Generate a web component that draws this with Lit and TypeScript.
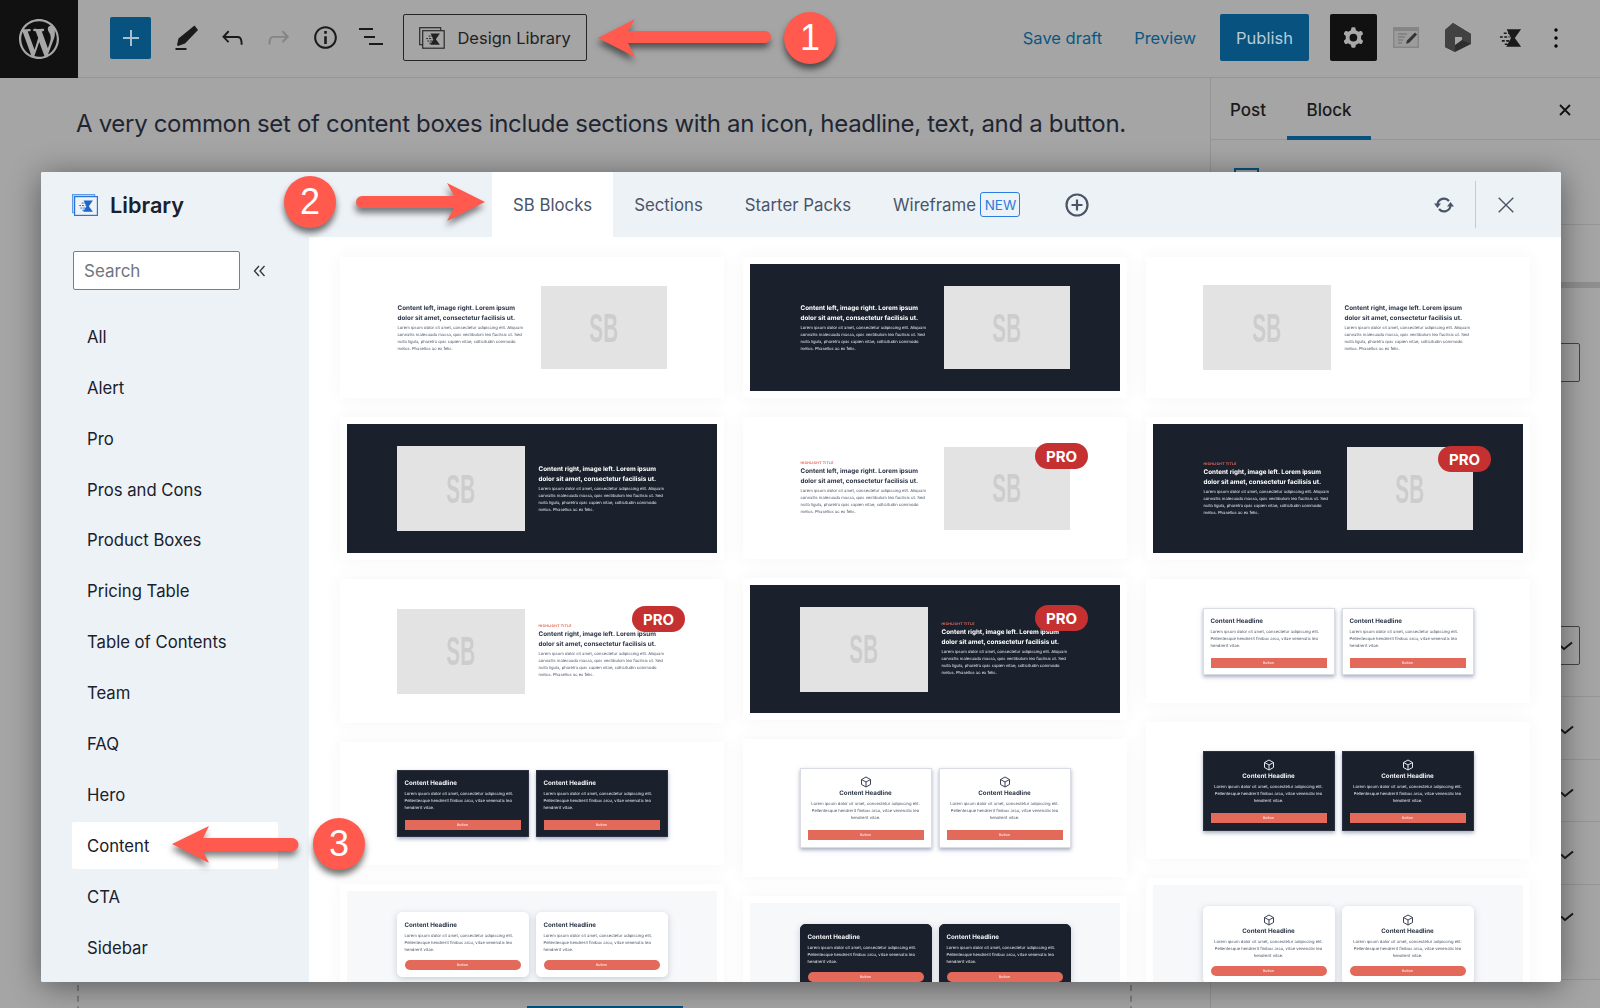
import { LitElement, html, css, svg } from "lit";
import { customElement } from "lit/decorators.js";

const kGlyph = (c: string) => svg`
  <path fill="${c}" d="M9 1H24L17.5 10L24 19H8.500L13.500 10Z"/>
  <path fill="#0000" stroke="${c}" stroke-width="1.600" stroke-dasharray="3 1.500" d="M6 5H13M2 9H12M4 13H12M7 16.500H12"/>`;

const kIcon = (c: string) => html`<svg class="ki" viewBox="0 0 26 20" width="25" height="20">${kGlyph(c)}</svg>`;

const cube = html`<svg class="cube" viewBox="0 0 24 24"><path d="M12 2L21 7V17L12 22L3 17V7ZM3 7L12 12L21 7M12 12V22"/></svg>`;

type Card = {
  h: number; kind: "hero" | "duo"; dark?: boolean; imgLeft?: boolean; hl?: boolean; pro?: number; rightTitle?: boolean;
  center?: boolean; rounded?: boolean; inset?: boolean;
};

const columns: Card[][] = [
  [
    { h: 141, kind: "hero" },
    { h: 143, kind: "hero", dark: true, imgLeft: true, rightTitle: true },
    { h: 144, kind: "hero", imgLeft: true, rightTitle: true, hl: true, pro: 27 },
    { h: 123, kind: "duo", dark: true },
    { h: 140, kind: "duo", rounded: true, inset: true },
  ],
  [
    { h: 141, kind: "hero", dark: true },
    { h: 142, kind: "hero", hl: true, pro: 26 },
    { h: 142, kind: "hero", dark: true, imgLeft: true, rightTitle: true, hl: true, pro: 27 },
    { h: 138, kind: "duo", center: true },
    { h: 140, kind: "duo", dark: true, rounded: true, inset: true },
  ],
  [
    { h: 141, kind: "hero", imgLeft: true, rightTitle: true },
    { h: 143, kind: "hero", dark: true, rightTitle: true, hl: true, pro: 29 },
    { h: 124, kind: "duo" },
    { h: 137, kind: "duo", dark: true, center: true },
    { h: 140, kind: "duo", center: true, rounded: true, inset: true },
  ],
];

const menu = ["All", "Alert", "Pro", "Pros and Cons", "Product Boxes", "Pricing Table", "Table of Contents", "Team", "FAQ", "Hero", "Content", "CTA", "Sidebar"];

const badges = [
  { n: "1", x: 784, y: 12 },
  { n: "2", x: 284, y: 176 },
  { n: "3", x: 313, y: 818 },
];

@customElement("app-root")
export class AppRoot extends LitElement {
  static styles = css`
    :host { display: block; width: 1600px; height: 1008px; position: relative; overflow: hidden; background: #a5a5a5; font-family: Inter, "Liberation Sans", sans-serif; color: #1a1a1a; }
    svg { display: block; flex: none; }
    .top { display: flex; align-items: center; height: 78px; box-sizing: border-box; border-bottom: 1.5px solid #959595; padding-bottom: 1.500px; }
    .wp { width: 78px; height: 78px; background: #111; display: flex; align-items: center; justify-content: center; flex: none; align-self: flex-start; }
    .wp svg { fill: #a7a7a7; }
    .add { width: 41px; height: 42px; margin: 0 11px 0 32px; border-radius: 2px; background: #07527e; display: flex; align-items: center; justify-content: center; }
    .tool { width: 46.700px; display: flex; justify-content: center; }
    .tool svg { fill: #1a1a1a; }
    .tool.off svg { fill: #858585; }
    .design { margin-left: 8px; width: 184px; height: 47px; box-sizing: border-box; border: 1.500px solid #262626; border-radius: 2px; display: flex; align-items: center; gap: 12px; padding-left: 15px; font-size: 16.500px; color: #222; }
    .right { margin-left: auto; display: flex; align-items: center; }
    .link { font-size: 16.500px; color: #0b5782; }
    .publish { margin-left: 24px; width: 89px; height: 47px; background: #07527e; border-radius: 2px; color: #b9ccd9; font-size: 16.500px; display: flex; align-items: center; justify-content: center; }
    .gear { margin: 0 3px 0 21px; width: 47px; height: 47px; border-radius: 2px; background: #111; display: flex; align-items: center; justify-content: center; }
    .gear svg { fill: #a9a9a9; }
    .cell { width: 52px; display: flex; justify-content: center; }
    .cell.dots { width: 40px; margin-right: 24px; }

    .body { display: flex; height: 930px; }
    .editor { width: 1210px; flex: none; box-sizing: border-box; padding: 31px 0 0 76px; }
    .lead { margin: 0; font-size: 24px; letter-spacing: -.32px; line-height: 30px; color: #1f2533; white-space: nowrap; }
    .outline { margin: 846px 0 0 1px; width: 1055px; height: 60px; box-sizing: border-box; border-left: 2px dashed #7c7c7c; border-right: 2px dashed #7c7c7c; position: relative; display: flex; justify-content: center; padding: 21px 0 0 0; }
    .outline i { display: block; width: 156px; height: 4px; background: #07527e; }

    .side { flex: 1; border-left: 1.500px solid #959595; }
    .stabs { height: 62px; box-sizing: border-box; border-bottom: 1.500px solid #959595; display: flex; align-items: flex-start; font-size: 17px; font-weight: 500; position: relative; padding-left: 19px; }
    .stabs span { display: flex; align-items: center; height: 62px; box-sizing: border-box; padding-top: 6px; border-bottom: 4px solid transparent; }
    .stabs .act { margin-left: 21px; width: 84px; justify-content: center; border-bottom-color: #07527e; }
    .stabs svg { position: absolute; right: 29px; top: 26px; }
    .peek { height: 85px; box-sizing: border-box; border-bottom: 1.500px solid #959595; padding: 28px 0 0 23px; display: flex; gap: 21px; }
    .peek b { display: block; width: 25px; height: 20px; border: 2px solid #07527e; box-sizing: border-box; }
    .peek u { display: block; width: 40px; height: 6px; background: #999; margin-top: 3px; }
    .band { margin-top: 57px; height: 6px; background: #8f8f8f; }
    .box { height: 39px; margin: 55px 20px 0; box-sizing: border-box; border: 1.500px solid #444; border-radius: 2px; display: flex; align-items: center; justify-content: flex-end; padding-right: 6px; }
    .box.two { margin-top: 244px; }
    .row { margin-top: 0; height: 62.500px; box-sizing: border-box; border-top: 1.500px solid #959595; display: flex; justify-content: flex-end; padding: 28px 26px 0 0; }
    .row.first { margin-top: 31px; }
    .row.tall { height: 95px; padding-top: 27px; }
    .row.thin { height: 20px; }

    .modal { position: absolute; left: 41px; top: 172px; width: 1520px; height: 810px; background: #fff; border-radius: 2px; box-shadow: 0 4px 32px rgba(0,0,0,.45); overflow: hidden; display: flex; flex-direction: column; }
    .mhead { height: 65px; flex: none; background: #edf2f7; display: flex; align-items: center; font-size: 16.800px; color: #4a5568; }
    .brand { width: 451px; flex: none; box-sizing: border-box; padding-left: 31px; display: flex; align-items: center; gap: 12px; font-size: 21.700px; font-weight: 600; color: #1a202c; }
    .tab { height: 65px; padding: 0 21px; display: flex; align-items: center; }
    .tab.on { background: #fff; }
    .new { margin-left: -16.500px; width: 40px; height: 25px; box-sizing: border-box; border: 1.200px solid #2b7de0; border-radius: 3px; color: #2b7de0; font-size: 13.500px; display: flex; align-items: center; justify-content: center; }
    .plus { margin-left: 45px; }
    .mctl { margin-left: auto; display: flex; align-items: center; height: 47px; }
    .mctl .sep { width: 1.500px; height: 47px; background: #c3c9d1; margin: 0 22px 0 21px; }
    .mctl .x { margin-right: 47px; }
    .mbody { flex: 1; display: flex; min-height: 0; }
    .lib { width: 268px; flex: none; background: #edf2f7; box-sizing: border-box; padding: 14px 0 0 32px; }
    .search { display: flex; align-items: center; gap: 13px; }
    .input { width: 167px; height: 39px; box-sizing: border-box; border: 1.500px solid #7d7d7d; border-radius: 2px; background: #fff; padding-left: 10px; font-size: 17px; color: #6f7680; display: flex; align-items: center; }
    .menu { margin: 23.400px 0 0 -1px; display: flex; flex-direction: column; gap: 3.900px; }
    .item { width: 206px; height: 47px; box-sizing: border-box; padding-left: 15px; display: flex; align-items: center; font-size: 16.700px; color: #1a202c; border-radius: 2px; }
    .item.on { background: #fff; }
    .grid { flex: 1; display: flex; gap: 19px; padding: 20px 0 0 31px; overflow: hidden; }
    .col { width: 384px; flex: none; display: flex; flex-direction: column; gap: 19px; }

    .card { flex: none; position: relative; background: #fff; box-sizing: border-box; box-shadow: 0 0 18px rgba(0,0,0,.045); display: flex; }
    .card.pad { padding: 7px; }
    .stage { flex: 1; display: flex; align-items: center; justify-content: center; filter: blur(.25px); }
    .stage.dark { background: #1a202c; }
    .stage.inset { background: #f7f8fa; align-items: flex-start; padding-top: 21px; }
    .hero { display: flex; align-items: center; gap: 14px; }
    .copy { width: 129px; white-space: nowrap; color: #4a5568; text-rendering: geometricPrecision; }
    .dark .copy { color: #e7e9ee; }
    .tag { font-size: 3.500px; line-height: 6px; font-weight: 700; color: #e36a5a; letter-spacing: .2px; }
    .hd { font-size: 6.300px; line-height: 10px; font-weight: 700; color: #2d3748; margin-bottom: 2px; }
    .dark .hd { color: #fff; }
    .tx { font-size: 4.180px; line-height: 7px; }
    .img { width: 126px; height: 83px; background: #e3e3e3; display: flex; align-items: center; justify-content: center; flex: none; }
    .img.wide { width: 128px; height: 85px; }
    .img span { display: block; font: 700 40px/1 "Liberation Sans", sans-serif; color: #cdcdcd; transform: scaleX(.52); }
    .pro { position: absolute; right: 39px; width: 53px; height: 26px; border-radius: 13px; background: #c53030; color: #fff; font-size: 15px; font-weight: 700; display: flex; align-items: center; justify-content: center; }
    .duo { display: flex; gap: 7px; }
    .mini { width: 132px; box-sizing: border-box; padding: 8px 7px 6px; background: #fff; border: 1px solid #d9dce2; box-shadow: 0 2px 4px rgba(90,105,140,.55); color: #4a5568; white-space: nowrap; text-rendering: geometricPrecision; }
    .mini.dk { background: #1a202c; border-color: #2b3140; color: #e7e9ee; }
    .mini.ctr { text-align: center; padding: 7px 7px 7px; }
    .mini.rd { border-radius: 5px; border-color: #fff; box-shadow: 0 2px 7px rgba(90,105,140,.3); }
    .mini.rd.dk { border-color: #1a202c; }
    .mh { font-size: 6.200px; line-height: 9px; font-weight: 700; color: #2d3748; margin-bottom: 3px; }
    .dk .mh { color: #f1f2f4; }
    .btn { margin-top: 8px; height: 10px; background: #e36a5a; color: #fff; font-size: 3.600px; display: flex; align-items: center; justify-content: center; }
    .rd .btn { border-radius: 5px; margin-top: 6px; }
    .cube { width: 12px; height: 12px; margin: 0 auto 1px; fill: none; stroke: #3b4250; stroke-width: 2; }
    .dk .cube { stroke: #e7e9ee; }

    .annot { position: absolute; inset: 0; pointer-events: none; }
    .annot svg path { fill: #ff5a4d; filter: drop-shadow(-1px 5px 3px rgba(0,0,0,.5)); }
    .num { position: absolute; width: 52px; height: 52px; border-radius: 50%; background: #ff5a4d; color: #fff; font: 400 36px/52px "Liberation Sans", sans-serif; text-align: center; box-shadow: 0 5px 6px rgba(0,0,0,.55); }
  `;

  private hero(c: Card) {
    const copy = html`<div class="copy">
      ${c.hl ? html`<div class="tag">HIGHLIGHT TITLE</div>` : ""}
      <div class="hd">${c.rightTitle ? "Content right, image left." : "Content left, image right."} Lorem ipsum<br />dolor sit amet, consectetur facilisis ut.</div>
      <div class="tx">Lorem ipsum dolor sit amet, consectetur adipiscing elit. Aliquam<br />convallis malesuada massa, quis vestibulum leo facilisis ut. Sed<br />nulla ligula, pharetra quis sapien vitae, sollicitudin commodo<br />metus. Phasellus ac ex felis.</div>
    </div>`;
    const img = html`<div class="img ${c.imgLeft ? "wide" : ""}"><span>SB</span></div>`;
    return html`<div class="hero">${c.imgLeft ? html`${img}${copy}` : html`${copy}${img}`}</div>`;
  }

  private mini(c: Card) {
    const cls = ["mini", c.dark ? "dk" : "", c.center ? "ctr" : "", c.rounded ? "rd" : ""].join(" ");
    return html`<div class="${cls}">
      ${c.center ? cube : ""}
      <div class="mh">Content Headline</div>
      <div class="tx">Lorem ipsum dolor sit amet, consectetur adipiscing elit.<br />Pellentesque hendrerit finibus arcu, vitae venenatis leo<br />hendrerit vitae.</div>
      <div class="btn">Button</div>
    </div>`;
  }

  private card(c: Card) {
    const pad = c.inset || (c.dark && c.kind === "hero");
    const stage = ["stage", c.dark && c.kind === "hero" ? "dark" : "", c.inset ? "inset" : ""].join(" ");
    return html`<div class="card ${pad ? "pad" : ""}" style="height:${c.h}px">
      <div class="${stage}">
        ${c.kind === "hero" ? this.hero(c) : html`<div class="duo">${this.mini(c)}${this.mini(c)}</div>`}
      </div>
      ${c.pro ? html`<div class="pro" style="top:${c.pro}px">PRO</div>` : ""}
    </div>`;
  }

  private check() {
    return html`<svg width="14" height="10" viewBox="0 0 14 10"><path d="M1 4.500L5 8L13 1.500" fill="none" stroke="#1a1a1a" stroke-width="2"/></svg>`;
  }

  render() {
    return html`
      <div class="top">
        <div class="wp"><svg width="40" height="40" viewBox="0 0 20 20"><path d="M20 10c0-5.510-4.490-10-10-10C4.480 0 0 4.490 0 10c0 5.520 4.480 10 10 10 5.510 0 10-4.480 10-10zM7.780 15.370L4.370 6.220c.55-.02 1.170-.08 1.170-.08.5-.06.44-1.130-.06-1.110 0 0-1.450.11-2.370.11-.18 0-.37 0-.58-.01C4.120 2.690 6.870 1.110 10 1.110c2.330 0 4.450.87 6.050 2.340-.68-.11-1.650.39-1.650 1.580 0 .74.45 1.360.9 2.100.35.61.55 1.360.55 2.460 0 1.490-1.400 5-1.400 5l-3.030-8.370c.54-.02.82-.17.82-.17.5-.05.44-1.250-.06-1.220 0 0-1.440.12-2.380.12-.87 0-2.330-.12-2.330-.12-.5-.03-.56 1.200-.06 1.220l.92.08 1.260 3.410zM17.410 10c.24-.64.74-1.870.43-4.250.7 1.290 1.050 2.710 1.050 4.250 0 3.290-1.730 6.240-4.400 7.780.97-2.590 1.940-5.200 2.920-7.780zM6.100 18.090C3.120 16.650 1.110 13.530 1.110 10c0-1.300.23-2.480.72-3.590C3.250 10.300 4.670 14.200 6.100 18.090zm4.030-6.630l2.580 6.980c-.86.29-1.760.45-2.710.45-.79 0-1.570-.11-2.290-.33.81-2.380 1.620-4.740 2.420-7.100z"/></svg></div>
        <div class="add"><svg width="20" height="20" viewBox="0 0 20 20"><path d="M10 2V18M2 10H18" stroke="#a9c0cf" stroke-width="2"/></svg></div>
        <div class="tool"><svg width="31" height="31" viewBox="0 0 31 31"><path d="M24.500 3.500L28 8L15 21.500L8 24L7 23L8.500 16.500Z"/><rect x="5.500" y="26" width="11" height="2"/></svg></div>
        <div class="tool"><svg width="31" height="31" viewBox="0 0 24 24"><path d="M18.300 11.700c-.6-.6-1.400-.9-2.300-.9H6.700l2.900-3.300-1.100-1-4.500 5L8.500 16l1-1-2.700-2.700H16c.5 0 .9.2 1.300.5 1 1 1 3.400 1 4.500v.3h1.500v-.2c0-1.500 0-4.300-1.500-5.700z"/></svg></div>
        <div class="tool off"><svg width="31" height="31" viewBox="0 0 24 24"><path d="M15.600 6.500l-1.100 1 2.900 3.300H8c-.9 0-1.700.3-2.300.9-1.400 1.500-1.400 4.200-1.400 5.600v.2h1.500v-.3c0-1.100 0-3.500 1-4.500.3-.3.7-.5 1.300-.5h9.200L14.500 15l1.100 1.100 4.600-4.600-4.600-5z"/></svg></div>
        <div class="tool"><svg width="31" height="31" viewBox="0 0 24 24"><path d="M12 3.200c-4.800 0-8.800 3.900-8.800 8.800 0 4.800 3.900 8.800 8.800 8.800 4.800 0 8.800-3.900 8.800-8.800 0-4.800-4-8.800-8.800-8.800zm0 16c-4 0-7.200-3.300-7.200-7.200C4.800 8 8 4.800 12 4.800s7.200 3.300 7.200 7.200c0 4-3.200 7.200-7.200 7.200zM11 17h2v-6h-2v6zm0-8h2V7h-2v2z"/></svg></div>
        <div class="tool"><svg width="31" height="31" viewBox="0 0 31 31"><rect x="2" y="6" width="14" height="2"/><rect x="7" y="14" width="11" height="2"/><rect x="12" y="21" width="14" height="2"/></svg></div>
        <div class="design">
          <svg width="26" height="22" viewBox="0 0 26 22"><rect x=".7" y=".7" width="21" height="17" fill="none" stroke="#2a2a2a" stroke-width="1.200"/><rect x="3.700" y="3.700" width="21.500" height="17.500" fill="#a5a5a5" stroke="#2a2a2a" stroke-width="1.200"/><g transform="translate(6 6) scale(.62)">${kGlyph("#222")}</g></svg>
          <span>Design Library</span>
        </div>
        <div class="right">
          <span class="link">Save draft</span>
          <span class="link" style="margin-left:32px">Preview</span>
          <div class="publish">Publish</div>
          <div class="gear"><svg width="31" height="31" viewBox="0 0 24 24"><path fill-rule="evenodd" d="M10.289 4.836A1 1 0 0111.275 4h1.306a1 1 0 01.987.836l.244 1.466c.787.26 1.503.679 2.108 1.218l1.393-.522a1 1 0 011.216.437l.653 1.130a1 1 0 01-.23 1.273l-1.148.944a6.025 6.025 0 010 2.435l1.149.946a1 1 0 01.23 1.272l-.653 1.130a1 1 0 01-1.216.437l-1.394-.522c-.605.54-1.320.958-2.108 1.218l-.244 1.466a1 1 0 01-.987.836h-1.306a1 1 0 01-.986-.836l-.244-1.466a5.995 5.995 0 01-2.108-1.218l-1.394.522a1 1 0 01-1.217-.436l-.653-1.131a1 1 0 01.23-1.272l1.149-.946a6.026 6.026 0 010-2.435l-1.148-.944a1 1 0 01-.23-1.272l.653-1.131a1 1 0 011.217-.437l1.393.522a5.994 5.994 0 012.108-1.218l.244-1.466zM14.929 12a3 3 0 11-6 0 3 3 0 016 0z"/></svg></div>
          <div class="cell"><svg width="26" height="21" viewBox="0 0 26 21"><rect x=".7" y=".7" width="24.600" height="19.600" fill="#9c9c9c" stroke="#868686" stroke-width="1.400"/><rect x="1" y="1" width="24" height="3" fill="#858585"/><path d="M5 7H14M5 10H12M5 13H10M5 16H9" stroke="#7e7e7e" stroke-width="1.500"/><path d="M22 5.500L24 7.500L16.500 15.500L13 17L14 13.500Z" fill="#333"/></svg></div>
          <div class="cell"><svg width="27" height="30" viewBox="0 0 27 30"><path fill="#2e2e2e" d="M8 0L26 11V21L10 29L0 24V7Z"/><path fill="#424242" d="M8 0L26 11V21L17 17V14H10V29L0 24V7Z"/><path fill="#a5a5a5" d="M10 14H17V17L10 22Z"/></svg></div>
          <div class="cell">${kIcon("#1a1a1a")}</div>
          <div class="cell dots"><svg width="4" height="20" viewBox="0 0 4 20"><circle cx="2" cy="2" r="1.700"/><circle cx="2" cy="10" r="1.700"/><circle cx="2" cy="18" r="1.700"/></svg></div>
        </div>
      </div>

      <div class="body">
        <div class="editor">
          <p class="lead">A very common set of content boxes include sections with an icon, headline, text, and a button.</p>
          <div class="outline"><i></i></div>
        </div>
        <div class="side">
          <div class="stabs"><span>Post</span><span class="act">Block</span>
            <svg width="12" height="12" viewBox="0 0 12 12"><path d="M1 1L11 11M11 1L1 11" stroke="#111" stroke-width="1.800"/></svg></div>
          <div class="peek"><b></b><u></u></div>
          <div class="band"></div>
          <div class="box"></div>
          <div class="box two">${this.check()}</div>
          <div class="row first">${this.check()}</div>
          <div class="row">${this.check()}</div>
          <div class="row">${this.check()}</div>
          <div class="row tall">${this.check()}</div>
          <div class="row thin"></div>
          <div class="row thin"></div>
        </div>
      </div>

      <div class="modal">
        <div class="mhead">
          <div class="brand">
            <svg width="26" height="22" viewBox="0 0 26 22"><rect x=".6" y=".6" width="22" height="18" fill="#cfe0f6" stroke="#5f9be6" stroke-width="1.200"/><rect x="2.600" y="2.600" width="22.800" height="18.800" fill="#edf2f7" stroke="#2b74d8" stroke-width="1.200"/><g transform="translate(6 6) scale(.62)">${kGlyph("#1f66c9")}</g></svg>
            <span>Library</span>
          </div>
          <div class="tab on">SB Blocks</div>
          <div class="tab">Sections</div>
          <div class="tab">Starter Packs</div>
          <div class="tab">Wireframe</div>
          <div class="new">NEW</div>
          <svg class="plus" width="24" height="24" viewBox="0 0 24 24"><circle cx="12" cy="12" r="10.500" fill="none" stroke="#4a5568" stroke-width="2.200"/><path d="M12 6.500V17.500M6.500 12H17.500" stroke="#4a5568" stroke-width="2.200"/></svg>
          <div class="mctl">
            <svg width="20" height="18" viewBox="0 0 20 18"><path d="M3.500 8.500A6.500 6.500 0 0 1 15 5M16.500 9.500A6.500 6.500 0 0 1 5 13" fill="none" stroke="#4a5568" stroke-width="2.200"/><path d="M0 7.500H7L3.500 12ZM20 10.500H13L16.500 6Z" fill="#4a5568"/></svg>
            <div class="sep"></div>
            <svg class="x" width="16" height="16" viewBox="0 0 16 16"><path d="M.7 .7L15.300 15.300M15.300 .7L.7 15.300" stroke="#4a5568" stroke-width="1.400"/></svg>
          </div>
        </div>
        <div class="mbody">
          <div class="lib">
            <div class="search">
              <div class="input">Search</div>
              <svg width="13" height="12" viewBox="0 0 13 12"><path d="M6 1L1.500 6L6 11M11.500 1L7 6L11.500 11" fill="none" stroke="#333" stroke-width="1.300"/></svg>
            </div>
            <div class="menu">
              ${menu.map((m) => html`<div class="item ${m === "Content" ? "on" : ""}">${m}</div>`)}
            </div>
          </div>
          <div class="grid">
            ${columns.map((col) => html`<div class="col">${col.map((c) => this.card(c))}</div>`)}
          </div>
        </div>
      </div>

      <div class="annot">
        <svg width="1600" height="1008" viewBox="0 0 1600 1008">
          <path d="M598 38L635 19L628 31H765A6 6 0 0 1 765 43H628L635 57Z"/>
          <path d="M485 202L447 183L454 196H362A6 6 0 0 0 362 208H454L447 221Z"/>
          <path d="M172 844L209 826L203 838H292A6.500 6.500 0 0 1 292 851H203L209 863Z"/>
        </svg>
        ${badges.map((b) => html`<div class="num" style="left:${b.x}px;top:${b.y}px">${b.n}</div>`)}
      </div>
    `;
  }
}
